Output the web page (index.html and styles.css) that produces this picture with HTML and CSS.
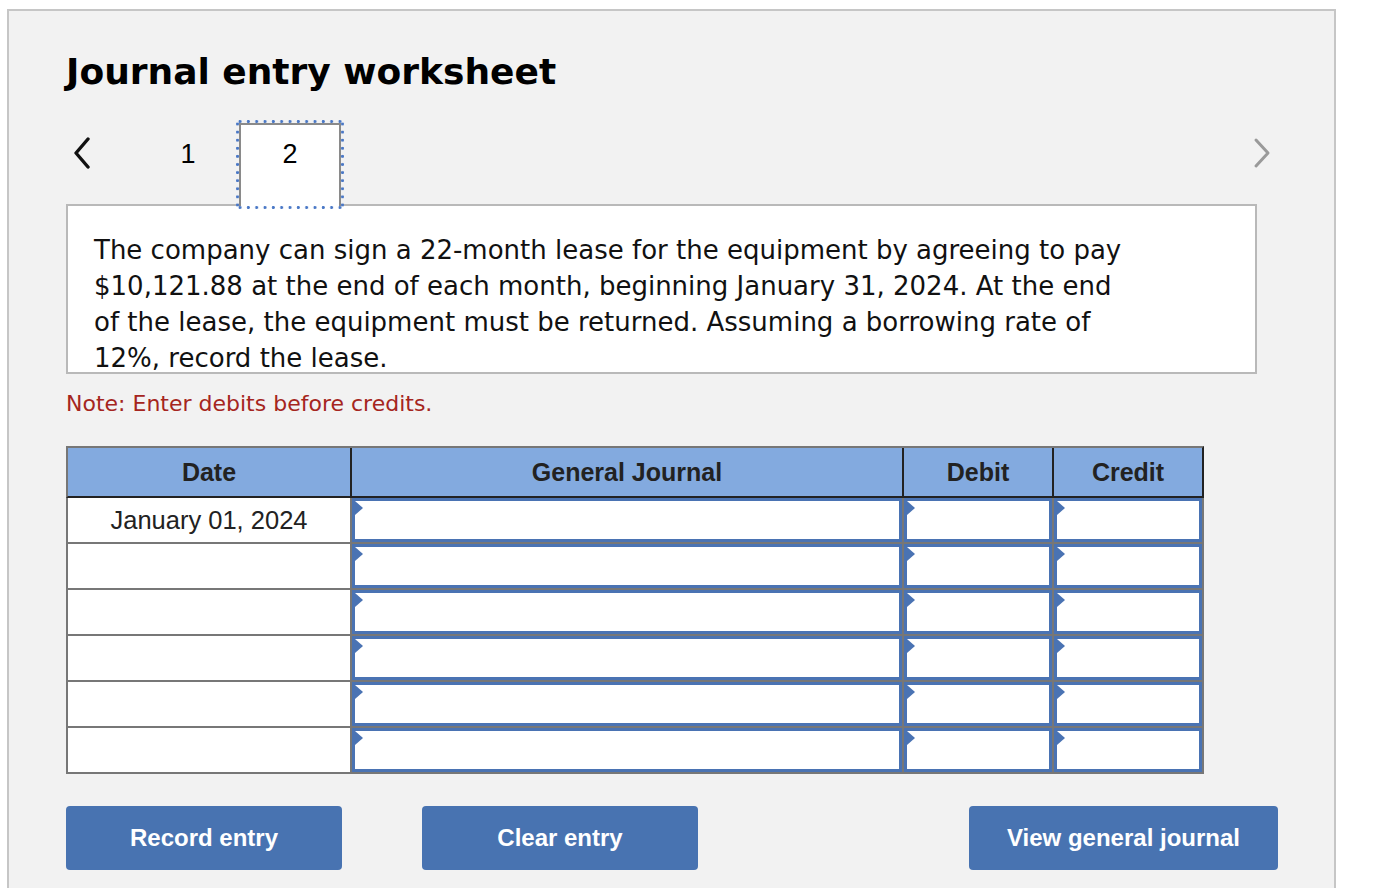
FILE: index.html
```html
<!DOCTYPE html>
<html lang="en">
<head>
<meta charset="utf-8">
<title>Journal entry worksheet</title>
<link rel="stylesheet" href="styles.css">
</head>
<body>
<div class="panel">
  <div class="content">
    <h1 class="title">Journal entry worksheet</h1>

    <div class="tabs">
      <span class="nav prev">
        <svg width="20" height="32" viewBox="0 0 20 32"><path d="M16 2 L4 16 L16 30" fill="none" stroke="#111" stroke-width="3.4" stroke-linecap="round" stroke-linejoin="round"/></svg>
      </span>
      <span class="tab">1</span>
      <span class="tab active">2</span>
      <span class="nav next">
        <svg width="20" height="32" viewBox="0 0 20 32"><path d="M4 3 L16 16 L4 29" fill="none" stroke="#9a9a9a" stroke-width="3" stroke-linecap="round" stroke-linejoin="round"/></svg>
      </span>
    </div>

    <div class="question">
      <p>The company can sign a 22-month lease for the equipment by agreeing to pay $10,121.88 at the end of each month, beginning January 31, 2024. At the end of the lease, the equipment must be returned. Assuming a borrowing rate of 12%, record the lease.</p>
    </div>

    <p class="note">Note: Enter debits before credits.</p>

    <div class="journal">
      <div class="jhead">
        <div class="th">Date</div>
        <div class="th">General Journal</div>
        <div class="th">Debit</div>
        <div class="th">Credit</div>
      </div>
      <div class="jbody">
        <div class="td date">January 01, 2024</div>
        <div class="td"><div class="inp"></div></div>
        <div class="td"><div class="inp"></div></div>
        <div class="td"><div class="inp"></div></div>

        <div class="td date"></div>
        <div class="td"><div class="inp"></div></div>
        <div class="td"><div class="inp"></div></div>
        <div class="td"><div class="inp"></div></div>

        <div class="td date"></div>
        <div class="td"><div class="inp"></div></div>
        <div class="td"><div class="inp"></div></div>
        <div class="td"><div class="inp"></div></div>

        <div class="td date"></div>
        <div class="td"><div class="inp"></div></div>
        <div class="td"><div class="inp"></div></div>
        <div class="td"><div class="inp"></div></div>

        <div class="td date"></div>
        <div class="td"><div class="inp"></div></div>
        <div class="td"><div class="inp"></div></div>
        <div class="td"><div class="inp"></div></div>

        <div class="td date"></div>
        <div class="td"><div class="inp"></div></div>
        <div class="td"><div class="inp"></div></div>
        <div class="td"><div class="inp"></div></div>
      </div>
    </div>

    <div class="buttons">
      <button class="btn w276">Record entry</button>
      <button class="btn w276">Clear entry</button>
      <button class="btn w309 push">View general journal</button>
    </div>
  </div>
</div>
</body>
</html>
```

FILE: styles.css
```css
html, body {
  margin: 0;
  padding: 0;
  background: #ffffff;
}

.panel {
  margin: 9px 0 0 7px;
  width: 1329px;
  min-height: 960px;
  box-sizing: border-box;
  background: #f2f2f2;
  border: 2px solid #c6c6c6;
  padding: 0 0 0 57px;
}

.content {
  width: 1212px;
}

.title {
  margin: 0;
  padding-top: 39px;
  font-family: "DejaVu Sans", Verdana, sans-serif;
  font-weight: bold;
  font-size: 36px;
  line-height: 44px;
  color: #000;
}

.tabs {
  margin-top: 29px;
  display: flex;
  align-items: flex-start;
  height: 83px;
  margin-bottom: -2px;
  position: relative;
  z-index: 1;
}

.nav {
  display: flex;
  align-items: center;
  height: 60px;
}

.nav.prev {
  width: 71px;
  padding-left: 6px;
  box-sizing: border-box;
}

.nav.next {
  margin-left: auto;
  margin-right: 6px;
}

.tab {
  width: 102px;
  height: 62px;
  display: flex;
  align-items: center;
  justify-content: center;
  font-family: "Liberation Sans", Arial, sans-serif;
  font-size: 27px;
  color: #000;
}

.tab.active {
  position: relative;
  box-sizing: border-box;
  height: 83px;
  background: #fff;
  border: 2px solid #8a8a8a;
  border-bottom: none;
  align-items: flex-start;
  padding-top: 14px;
}

.tab.active::after {
  content: "";
  position: absolute;
  left: -5px;
  right: -5px;
  top: -5px;
  bottom: -3px;
  background:
    radial-gradient(circle, #4a78c6 1.2px, transparent 1.8px) 0 0 / 8px 3px space no-repeat,
    radial-gradient(circle, #4a78c6 1.2px, transparent 1.8px) 0 100% / 8px 3px space no-repeat,
    radial-gradient(circle, #4a78c6 1.2px, transparent 1.8px) 0 0 / 3px 8px no-repeat space,
    radial-gradient(circle, #4a78c6 1.2px, transparent 1.8px) 100% 0 / 3px 8px no-repeat space;
}

.question {
  width: 1191px;
  height: 170px;
  box-sizing: border-box;
  background: #fff;
  border: 2px solid #b9b9b9;
  padding: 26px 26px 0 26px;
}

.question p {
  margin: 0;
  width: 1050px;
  font-family: "DejaVu Sans", Verdana, sans-serif;
  font-size: 26px;
  line-height: 36px;
  color: #111;
}

.note {
  margin: 17px 0 0 0;
  font-family: "DejaVu Sans", Verdana, sans-serif;
  font-size: 22px;
  line-height: 26px;
  color: #a52520;
}

.journal {
  margin-top: 29px;
  width: 1138px;
  font-family: "Liberation Sans", Arial, sans-serif;
}

.jhead {
  display: grid;
  grid-template-columns: 282px 550px 148px 148px;
  gap: 2px;
  background: #222;
  border-top: 2px solid #777;
  border-left: 2px solid #777;
  border-right: 2px solid #222;
  border-bottom: 2px solid #222;
}

.th {
  height: 48px;
  background: #83aadf;
  display: flex;
  align-items: center;
  justify-content: center;
  font-weight: bold;
  font-size: 25px;
  color: #222;
}

.jbody {
  display: grid;
  grid-template-columns: 282px 550px 148px 148px;
  grid-auto-rows: 44px;
  gap: 2px;
  background: #777;
  border: 2px solid #777;
  border-top: none;
}

.td {
  background: #fff;
  display: flex;
}

.td.date {
  align-items: center;
  justify-content: center;
  font-size: 25.5px;
  color: #222;
  padding-top: 1px;
  box-sizing: border-box;
}

.inp {
  flex: 1;
  position: relative;
  border: 3px solid #4a73b3;
  background: #fff;
}

.inp::before {
  content: "";
  position: absolute;
  left: 0;
  top: 0;
  border-left: 8px solid #4a73b3;
  border-top: 7px solid transparent;
  border-bottom: 7px solid transparent;
}

.buttons {
  margin-top: 32px;
  display: flex;
  gap: 80px;
}

.btn {
  height: 64px;
  border: none;
  border-radius: 4px;
  background: #4873b1;
  color: #fff;
  font-family: "Liberation Sans", Arial, sans-serif;
  font-weight: bold;
  font-size: 24px;
  padding: 0;
}

.w276 { width: 276px; }
.w309 { width: 309px; }
.push { margin-left: auto; }
```
